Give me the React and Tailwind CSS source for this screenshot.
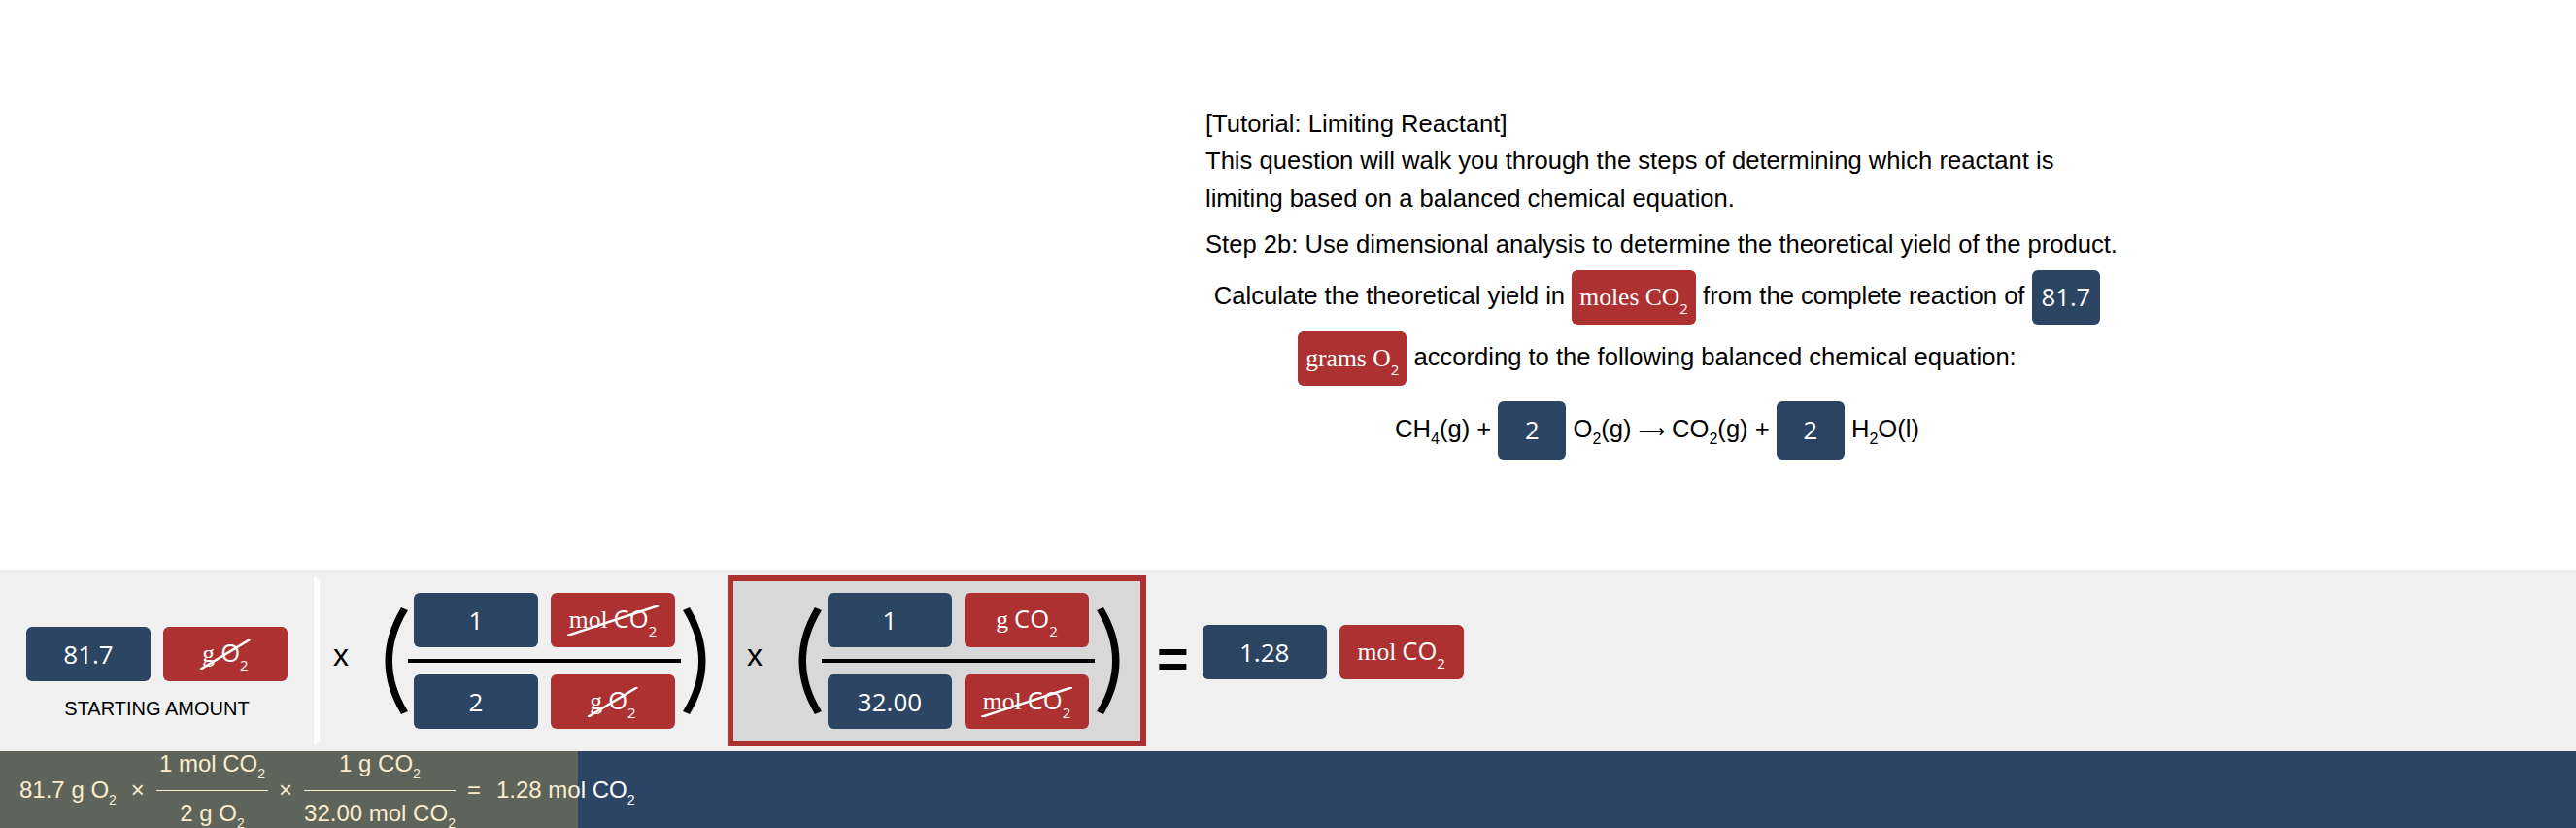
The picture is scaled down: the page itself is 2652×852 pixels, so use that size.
import React from 'react'

// palette lifted from the worksheet widget
const BLUE = 'bg-[#2c4563]'
const RED = 'bg-[#ad3131]'
const SANS = "font-['Liberation_Sans',Arial,sans-serif]"
const OPEN = "font-['Open_Sans',sans-serif]"
const SERIF = "font-['Liberation_Serif','Times_New_Roman',serif]"

function Strike() {
  return (
    <svg
      className="pointer-events-none absolute left-[-2px] top-[-1px] h-[calc(100%+2px)] w-[calc(100%+4px)]"
      viewBox="0 0 100 100"
      preserveAspectRatio="none"
    >
      <line x1="0" y1="100" x2="100" y2="0" stroke="white" strokeWidth="2.5" vectorEffect="non-scaling-stroke" />
    </svg>
  )
}

function Unit({ word, formula, struck = false }) {
  return (
    <span className="relative inline-flex items-baseline leading-[26px]">
      <span className={SERIF}>{word}</span>
      <span className={`ml-[6px] ${OPEN}`}>{formula}</span>
      <span className={`relative top-[9px] text-[15px] ${OPEN}`}>2</span>
      {struck && <Strike />}
    </span>
  )
}

function NumBox({ children }) {
  return (
    <div className={`flex h-[56px] w-[128px] items-center justify-center rounded-[6px] ${BLUE} ${OPEN} text-[26px] text-white`}>
      {children}
    </div>
  )
}

function UnitBox({ children }) {
  return (
    <div className={`flex h-[56px] w-[128px] items-center justify-center rounded-[6px] ${RED} text-[25.6px] text-white`}>
      {children}
    </div>
  )
}

function Paren({ right = false }) {
  return (
    <svg width="26" height="110" viewBox="0 0 26 110" className="shrink-0">
      <path
        d={right ? 'M7 0 L0 3 Q32 55 0 107 L7 110 Q40 55 7 0 Z' : 'M19 0 L26 3 Q-6 55 26 107 L19 110 Q-14 55 19 0 Z'}
        fill="black"
      />
    </svg>
  )
}

function Factor({ active = false, top, bottom }) {
  return (
    <div
      className={`flex h-[176px] items-center pl-[14px] pr-[19px] ${
        active
          ? 'ml-[1px] border-[6px] border-[#ad3131] bg-[#d8d8d8]'
          : 'border-y-[6px] border-l-[6px] border-r-0 border-y-transparent border-l-white'
      }`}
    >
      <span className="mb-[12px] w-[18px] text-[32px] leading-none">x</span>
      <div className="ml-[33px]">
        <Paren />
      </div>
      <div className="ml-[6px] flex flex-col">
        <div className="flex gap-[13px]">{top}</div>
        <div className="-mx-[6px] my-[12px] h-[4px] bg-black" />
        <div className="flex gap-[13px]">{bottom}</div>
      </div>
      <div className="ml-[8px]">
        <Paren right />
      </div>
    </div>
  )
}

function InlineNum({ children, tall = false }) {
  return (
    <span
      className={`inline-block min-w-[70px] rounded-[6px] px-[10px] text-center align-middle ${
        tall ? 'h-[60px] leading-[60px]' : 'h-[56px] leading-[56px]'
      } ${BLUE} ${OPEN} text-white`}
    >
      {children}
    </span>
  )
}

function InlineUnit({ word, formula }) {
  return (
    <span className={`inline-block h-[56px] rounded-[6px] px-[8px] align-middle leading-[56px] ${RED} ${SERIF} text-white`}>
      {word} {formula}
      <span className={`relative top-[9px] text-[15px] ${OPEN}`}>2</span>
    </span>
  )
}

function Sub({ children, className = 'text-[16px] top-[7px]' }) {
  return <span className={`relative ${className}`}>{children}</span>
}

function Frac({ num, den }) {
  return (
    <div className="flex flex-col items-center">
      <div className="px-[3px] pb-[10px] leading-[28px]">{num}</div>
      <div className="w-full border-t-[1.5px] border-white pt-[9px] text-center leading-[28px]">{den}</div>
    </div>
  )
}

const s2 = <Sub className="text-[14px] top-[7px]">2</Sub>

export default function App() {
  return (
    <div className={`h-[852px] w-full overflow-hidden bg-white ${SANS} text-black`}>
      {/* question text */}
      <div className="h-[587px] pt-[108px] text-[25.6px] leading-[38.4px]">
        <div className="ml-[1241px] w-[945px]">
          <p>[Tutorial: Limiting Reactant]</p>
          <p>This question will walk you through the steps of determining which reactant is limiting based on a balanced chemical equation.</p>
          <p className="mt-[9px]">Step 2b: Use dimensional analysis to determine the theoretical yield of the product.</p>
          <p className="mt-[2px] w-[930px] text-center leading-[63px]">
            Calculate the theoretical yield in <InlineUnit word="moles" formula="CO" /> from the complete reaction of{' '}
            <InlineNum>81.7</InlineNum> <InlineUnit word="grams" formula="O" /> according to the following balanced chemical equation:
          </p>
          <p className="mt-[11px] w-[930px] text-center leading-[63px]">
            CH<Sub>4</Sub>(g) + <InlineNum tall>2</InlineNum> O<Sub>2</Sub>(g){' '}
            <span className="font-['DejaVu_Sans',sans-serif] text-[19px]">⟶</span> CO<Sub>2</Sub>(g) +{' '}
            <InlineNum tall>2</InlineNum> H<Sub>2</Sub>O(l)
          </p>
        </div>
      </div>

      {/* dimensional analysis row */}
      <div className="flex h-[186px] items-center bg-[#f0f0f0]">
        <div className="flex w-[323px] flex-col items-center self-start pt-[58px]">
          <div className="flex gap-[13px]">
            <NumBox>81.7</NumBox>
            <UnitBox>
              <Unit word="g" formula="O" struck />
            </UnitBox>
          </div>
          <div className="mt-[17px] text-[20px] leading-[23px]">STARTING AMOUNT</div>
        </div>

        <Factor
          top={[
            <NumBox key="a">1</NumBox>,
            <UnitBox key="b">
              <Unit word="mol" formula="CO" struck />
            </UnitBox>,
          ]}
          bottom={[
            <NumBox key="c">2</NumBox>,
            <UnitBox key="d">
              <Unit word="g" formula="O" struck />
            </UnitBox>,
          ]}
        />

        <Factor
          active
          top={[
            <NumBox key="a">1</NumBox>,
            <UnitBox key="b">
              <Unit word="g" formula="CO" />
            </UnitBox>,
          ]}
          bottom={[
            <NumBox key="c">32.00</NumBox>,
            <UnitBox key="d">
              <Unit word="mol" formula="CO" struck />
            </UnitBox>,
          ]}
        />

        <span className="mb-[5px] ml-[11px] text-[56px] font-bold leading-none">=</span>

        <div className="ml-[14px] flex gap-[13px] self-start pt-[56px]">
          <NumBox>1.28</NumBox>
          <UnitBox>
            <Unit word="mol" formula="CO" />
          </UnitBox>
        </div>
      </div>

      {/* worked equation strip */}
      <div className={`relative h-[79px] ${BLUE} text-[24px] text-white`}>
        <div className="flex h-full items-center pl-[20px]">
          <span>81.7 g O{s2}</span>
          <span className="ml-[15px]">×</span>
          <div className="ml-[12px]">
            <Frac num={<>1 mol CO{s2}</>} den={<>2 g O{s2}</>} />
          </div>
          <span className="ml-[11px]">×</span>
          <div className="ml-[12px]">
            <Frac num={<>1 g CO{s2}</>} den={<>32.00 mol CO{s2}</>} />
          </div>
          <span className="ml-[12px]">=</span>
          <span className="ml-[16px]">1.28 mol CO{s2}</span>
        </div>
        <div className="pointer-events-none absolute inset-y-0 left-0 w-[595px] bg-[rgba(233,184,66,0.27)]" />
      </div>
    </div>
  )
}
